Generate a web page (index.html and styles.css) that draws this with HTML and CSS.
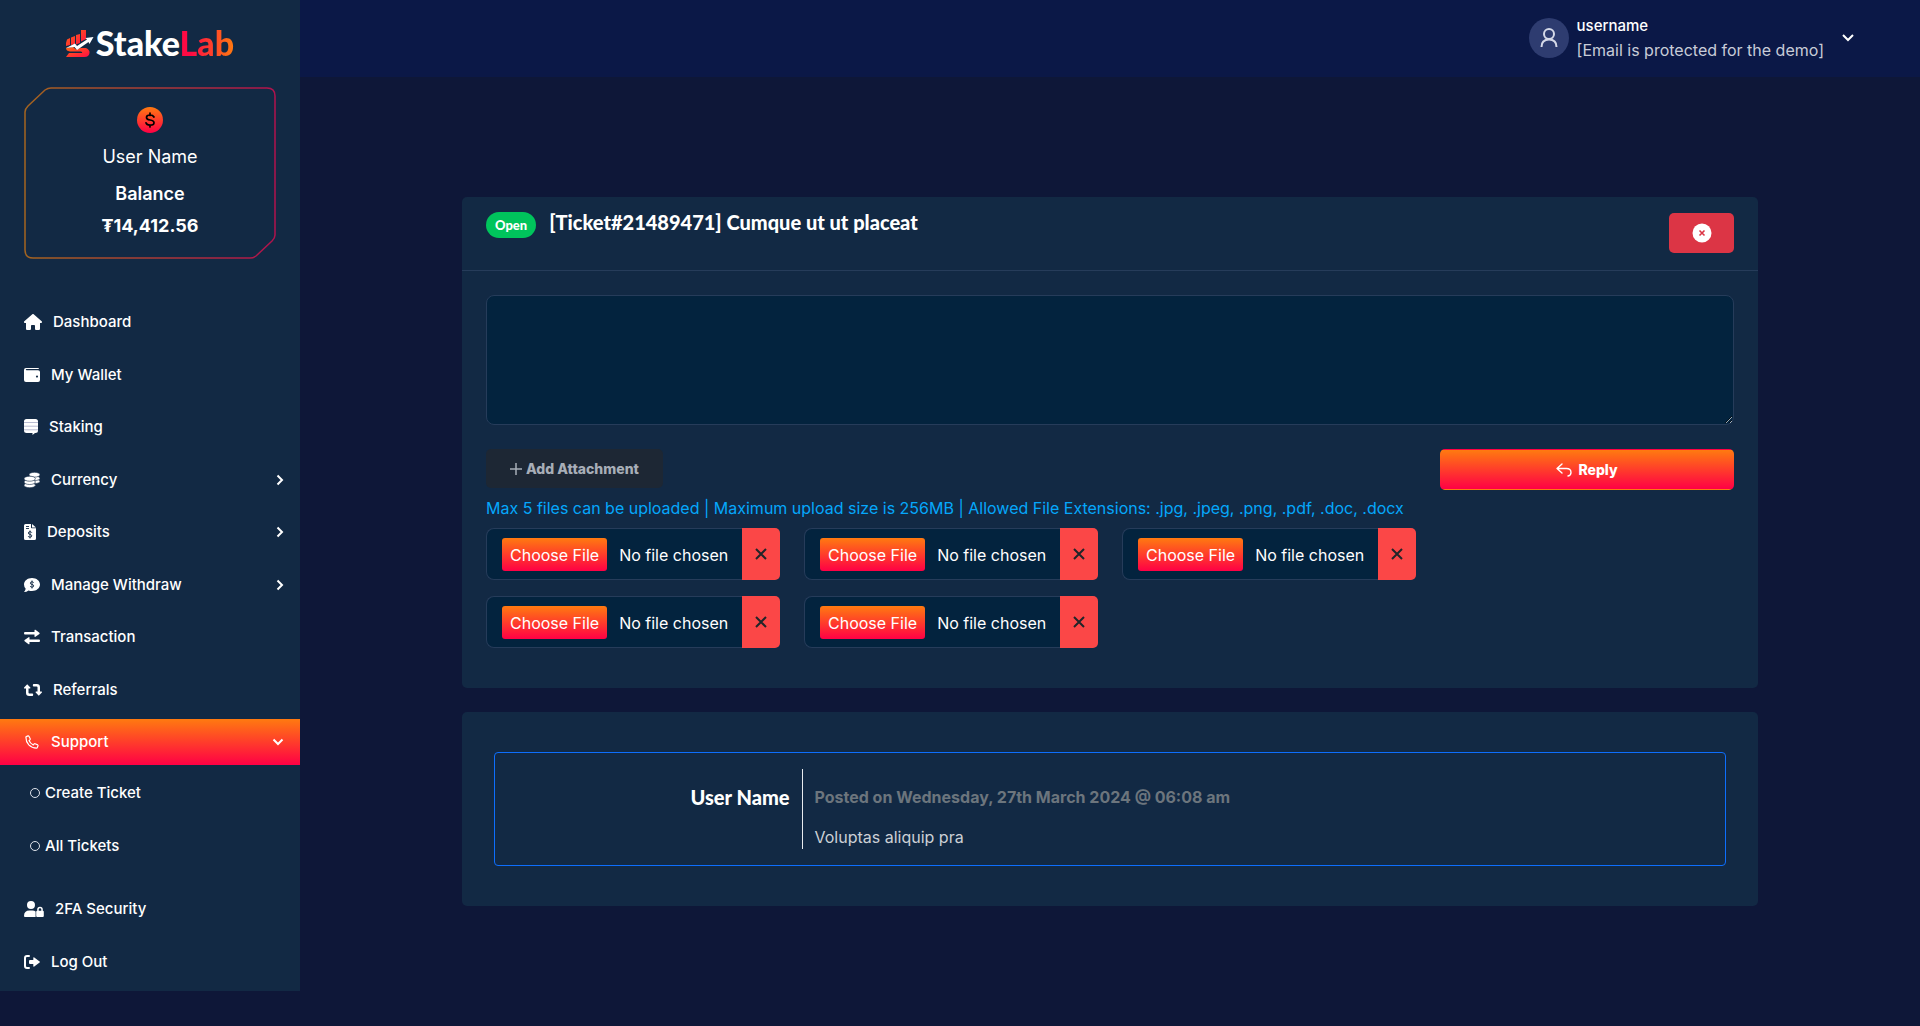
FILE: index.html
```html
<!DOCTYPE html>
<html lang="en">
<head>
<meta charset="utf-8">
<meta name="viewport" content="width=device-width, initial-scale=1">
<title>StakeLab - Support Ticket</title>
<link rel="stylesheet" href="styles.css">
</head>
<body>
<div class="layout">
  <aside class="sidebar">
    <a class="logo" href="#">
      <svg class="logo-mark" viewBox="0 0 28 27" aria-hidden="true">
        <defs><linearGradient id="mark" x1="0" y1="0" x2="1" y2="1"><stop offset="0" stop-color="#ff6a13"/><stop offset="1" stop-color="#ff0a44"/></linearGradient></defs>
        <path fill="url(#mark)" d="M0 13l1-3.500 3-1.500v7l-4 1zM5 7.500l4-1.500v8l-4 1zM10 5l4-1v9l-4 1.500zM15 0h5v9l-5 2.500z"/>
        <path fill="url(#mark)" d="M0 18l7-1 3 2.500 5-1.500h5q4 2 3.500 5-.5 4-5 4H0l3-4h13q1-1-1-1.500H4q-4-.5-4-3.500z"/>
        <path fill="#fff" d="M0 18l9-4.500 2 2.500 10-6.500-1.500-1.500 8-1-4 7-1-2-11.500 8-2.500-3z"/>
      </svg>
      <span class="logo-text">Stake<span class="logo-accent">Lab</span></span>
    </a>

    <section class="balance">
      <svg class="balance-frame" viewBox="0 0 252 172" preserveAspectRatio="none" aria-hidden="true">
        <defs><linearGradient id="frame" x1="0" x2="1"><stop offset="0" stop-color="#a4641f"/><stop offset="1" stop-color="#b0124d"/></linearGradient></defs>
        <path fill="none" stroke="url(#frame)" stroke-width="1.500" d="M27 1H243q8 0 8 8V148q0 3-3 6L232 169q-3 2-6 2H9q-8 0-8-8V25q0-3 3-6L21 3q3-2 6-2z"/>
      </svg>
      <svg class="coin" viewBox="0 0 26 26" aria-hidden="true">
        <defs><linearGradient id="coin" x1="0" y1="0" x2="0" y2="1"><stop offset="0" stop-color="#ff7a10"/><stop offset="1" stop-color="#ff0045"/></linearGradient></defs>
        <circle cx="13" cy="13" r="13" fill="url(#coin)"/>
        <path fill="none" stroke="#000" stroke-width="1.700" stroke-linecap="round" d="M13 6v2.500M13 18v2M17 10q-1-2-4-2-3.500 0-3.500 2.400 0 2 3.500 2.600 4 .6 4 2.800 0 2.400-4 2.400-3.400 0-4-2.400"/>
      </svg>
      <p class="balance-name">User Name</p>
      <h6 class="balance-title">Balance</h6>
      <p class="balance-amount">₮14,412.56</p>
    </section>

    <nav>
      <ul class="menu">
        <li><a href="#"><svg width="18" height="16" viewBox="0 0 576 512"><path fill="currentColor" d="M575.800 255.500c0 18-15 32.100-32 32.100h-32l.7 160.200c0 2.700-.2 5.400-.5 8.100V472c0 22.100-17.900 40-40 40H392c-22.100 0-40-17.900-40-40V384c0-17.700-14.300-32-32-32H256c-17.700 0-32 14.300-32 32v88c0 22.100-17.900 40-40 40H104c-22.100 0-40-17.900-40-40V287.600H32c-18 0-32-14-32-32.100 0-9 3-17 10-24L266.400 8c7-7 15-8 22-8s15 2 21 7L564.800 231.500c8 7 12 15 11 24z"/></svg><span>Dashboard</span></a></li>
        <li><a href="#"><svg width="16" height="16" viewBox="0 0 16 16"><path fill="currentColor" fill-rule="evenodd" d="M2 1h12q1 0 1 1H2.500q-.7 0-.7.600 0 .6.700.6H14q2 0 2 1.800v8q0 2-2 2H2q-2 0-2-2V3q0-2 2-2zm11 7.500a1 1 0 1 0 .01 0z"/></svg><span>My Wallet</span></a></li>
        <li><a href="#"><svg width="14" height="16" viewBox="0 0 14 16"><path fill="currentColor" d="M0 2.500Q0 0 2.500 0h9Q14 0 14 2.500V12q0 2-2.500 2H11l-2.500 2v-2h-6Q0 14 0 12z"/><path stroke="#b9bcd2" stroke-width="1" d="M0 3.500h14M0 7.200h14M0 10.800h14"/></svg><span>Staking</span></a></li>
        <li class="has-sub"><a href="#"><svg width="16" height="16" viewBox="0 0 16 16"><g fill="currentColor" stroke="#122944" stroke-width=".6"><ellipse cx="10.500" cy="9.300" rx="5.500" ry="2.300"/><ellipse cx="10.500" cy="6.300" rx="5.500" ry="2.300"/><ellipse cx="10.500" cy="2.700" rx="5.500" ry="2.400"/><ellipse cx="5.700" cy="13.200" rx="5.700" ry="2.500"/><ellipse cx="5.700" cy="10" rx="5.700" ry="2.500"/><ellipse cx="5.700" cy="6.700" rx="5.700" ry="2.500"/></g></svg><span>Currency</span><svg class="caret" viewBox="0 0 8 12"><path d="M1.500 1.500L6 6l-4.500 4.500"/></svg></a></li>
        <li class="has-sub"><a href="#"><svg width="12" height="16" viewBox="0 0 12 16"><path fill="currentColor" d="M1.500 0H7v3.500q0 .8.800.8H12v10.200q0 1.500-1.500 1.500h-9Q0 16 0 14.500v-13Q0 0 1.500 0zM8 0l4 3.500H8z"/><path fill="none" stroke="#122944" stroke-width=".9" d="M2 2.500h3M2 4.500h3M6 6.500v8M7.800 8.700Q7.400 7.700 6 7.700q-1.600 0-1.600 1.300T6 10.400q1.800.3 1.800 1.500T6 13.200q-1.500 0-1.900-1.100"/></svg><span>Deposits</span><svg class="caret" viewBox="0 0 8 12"><path d="M1.500 1.500L6 6l-4.500 4.500"/></svg></a></li>
        <li class="has-sub"><a href="#"><svg width="16" height="16" viewBox="0 0 16 16"><path fill="currentColor" d="M8 1c4.500 0 8 2.900 8 6.500S12.500 14 8 14q-1.900 0-3.500-.6Q2.600 14.900 0 15q1.300-1.300 1.700-3.200Q0 10 0 7.500C0 3.900 3.500 1 8 1z"/><path fill="none" stroke="#122944" stroke-width=".9" d="M8 3.500v8M9.700 5.700Q9.300 4.800 8 4.800q-1.600 0-1.600 1.300T8 7.400q1.700.3 1.700 1.500T8 10.200q-1.400 0-1.800-1.100"/></svg><span>Manage Withdraw</span><svg class="caret" viewBox="0 0 8 12"><path d="M1.500 1.500L6 6l-4.500 4.500"/></svg></a></li>
        <li><a href="#"><svg width="16" height="16" viewBox="0 0 16 16"><path fill="currentColor" d="M1 3h9.500V1.300q0-1 .9-.5l4 2.900q.6.600 0 1.200l-4 2.900q-.9.500-.9-.5V5.500H1q-1 0-1-1.200T1 3zM15 13H5.500v1.700q0 1-.9.500l-4-2.900q-.6-.6 0-1.200l4-2.900q.9-.5.9.5v1.800H15q1 0 1 1.200T15 13z"/></svg><span>Transaction</span></a></li>
        <li><a href="#"><svg width="18" height="16" viewBox="0 0 18 16"><path fill="currentColor" d="M3.200 2.200l3.100 3.400q.5.800-.5.900H4.500V10.700q0 .8.900.8h2.800q1 0 1 1.200t-1 1.200H5.200Q2 13.900 2 10.700V6.500H.6q-1-.1-.5-.9zM14.800 13.800l-3.100-3.400q-.5-.8.500-.9h1.300V5.300q0-.8-.9-.8H9.800q-1 0-1-1.200t1-1.200h3Q16 2.100 16 5.300v4.200h1.400q1 .1.500.9z"/></svg><span>Referrals</span></a></li>
        <li class="has-sub"><a class="active" href="#"><svg width="16" height="16" viewBox="0 0 16 16"><path fill="none" stroke="currentColor" stroke-width="1.200" stroke-linejoin="round" d="M2.300 2.600L4 1.900q.6-.2.900.3l1.300 2.500q.2.600-.2 1l-1 .9Q6.300 9.500 9.200 11l1-1.100q.4-.4.900-.2l2.600 1.200q.5.300.3.900l-.7 1.800q-.2.500-.8.500Q8 14 4.800 10.800 1.900 7.600 1.900 3.200q0-.4.400-.6z"/></svg><span>Support</span><svg class="caret caret-open" viewBox="0 0 12 8"><path d="M1.500 1.500L6 6l4.500-4.500"/></svg></a></li>
      </ul>
      <ul class="submenu">
        <li><a href="#"><span class="ring"></span>Create Ticket</a></li>
        <li><a href="#"><span class="ring"></span>All Tickets</a></li>
      </ul>
      <ul class="menu menu-end">
        <li><a href="#"><svg width="20" height="16" viewBox="0 0 20 16"><path fill="currentColor" fill-rule="evenodd" d="M7 0a4 4 0 1 1-.01 8A4 4 0 1 1 7 0zM5.500 9.500h3q1.800 0 3.100 1V16H1q-1 0-1-1 0-5.500 5.500-5.500zM13.200 9.700V8.500q0-2.700 2.800-2.700t2.800 2.700v1.200q1 .1 1 1.100V15q0 1-1 1h-5.600q-1 0-1-1v-4.200q0-1 1-1.100zm1.500 0h2.600V8.500q0-1.200-1.300-1.200t-1.300 1.200z"/></svg><span>2FA Security</span></a></li>
        <li><a href="#"><svg width="16" height="16" viewBox="0 0 16 16"><path fill="currentColor" d="M5 1q1 0 1 1T5 3H3Q2 3 2 4v8q0 1 1 1h2q1 0 1 1t-1 1H3q-3 0-3-3V4q0-3 3-3zM10.300 3.400l5.300 4q.7.600 0 1.200l-5.300 4q-1 .6-1-.6v-2H6q-1 0-1-1V7q0-1 1-1h3.300V4q0-1.200 1-.6z"/></svg><span>Log Out</span></a></li>
      </ul>
    </nav>
  </aside>

  <div class="page">
    <header class="topbar">
      <span class="avatar"><svg width="18" height="20" viewBox="0 0 18 20" aria-hidden="true"><circle cx="9" cy="6" r="5"/><path d="M1.500 19q0-7.500 7.500-7.500t7.500 7.500"/></svg></span>
      <span class="user"><span class="user-name">username</span><span class="user-mail">[Email is protected for the demo]</span></span>
      <button class="user-toggle" type="button" aria-label="Account menu"><svg width="14" height="10" viewBox="0 0 14 10"><path d="M2 2l5 5 5-5"/></svg></button>
    </header>

    <main class="content">
      <section class="card">
        <div class="card-head">
          <span class="badge">Open</span>
          <h5 class="ticket-title">[Ticket#21489471] Cumque ut ut placeat</h5>
          <button class="close-ticket" type="button" aria-label="Close ticket"><svg width="20" height="20" viewBox="0 0 20 20"><circle cx="10" cy="10" r="9.500" fill="#fff"/><path stroke="#dc3545" stroke-width="1.600" d="M7.500 7.500l5 5M12.500 7.500l-5 5"/></svg></button>
        </div>
        <form class="card-body">
          <textarea class="message" aria-label="Message"></textarea>
          <div class="reply-grid">
            <div>
              <button class="add" type="button" disabled><svg width="12" height="12" viewBox="0 0 12 12"><path stroke="currentColor" stroke-width="1.500" d="M6 0v12M0 6h12"/></svg>Add Attachment</button>
              <p class="hint">Max 5 files can be uploaded | Maximum upload size is 256MB | Allowed File Extensions: .jpg, .jpeg, .png, .pdf, .doc, .docx</p>
              <div class="files">
                <div class="file"><input type="file" aria-label="Attachment 1"><button type="button" aria-label="Remove attachment 1"><svg viewBox="0 0 12 12"><path d="M1 1l10 10M11 1L1 11"/></svg></button></div>
                <div class="file"><input type="file" aria-label="Attachment 2"><button type="button" aria-label="Remove attachment 2"><svg viewBox="0 0 12 12"><path d="M1 1l10 10M11 1L1 11"/></svg></button></div>
                <div class="file"><input type="file" aria-label="Attachment 3"><button type="button" aria-label="Remove attachment 3"><svg viewBox="0 0 12 12"><path d="M1 1l10 10M11 1L1 11"/></svg></button></div>
                <div class="file"><input type="file" aria-label="Attachment 4"><button type="button" aria-label="Remove attachment 4"><svg viewBox="0 0 12 12"><path d="M1 1l10 10M11 1L1 11"/></svg></button></div>
                <div class="file"><input type="file" aria-label="Attachment 5"><button type="button" aria-label="Remove attachment 5"><svg viewBox="0 0 12 12"><path d="M1 1l10 10M11 1L1 11"/></svg></button></div>
              </div>
            </div>
            <button class="reply" type="submit"><svg width="16" height="14" viewBox="0 0 16 14"><path fill="none" stroke="currentColor" stroke-width="1.400" stroke-linecap="round" stroke-linejoin="round" d="M6 1L1 5.500 6 10M1 5.500h9.500Q15 5.500 15 9.500q0 3-3 3.500"/></svg>Reply</button>
          </div>
        </form>
      </section>

      <section class="card thread">
        <article class="post">
          <h5 class="post-author">User Name</h5>
          <div class="post-body">
            <p class="post-date">Posted on Wednesday, 27th March 2024 @ 06:08 am</p>
            <p class="post-text">Voluptas aliquip pra</p>
          </div>
        </article>
      </section>
    </main>
  </div>
</div>
</body>
</html>
```

FILE: styles.css
```css
:root {
  --panel: #122944;
  --page: #0e1738;
  --field: #03233e;
  --line: #263c5a;
  --fire: linear-gradient(#ff7a10, #ff0045);
  --display: "Lato", "Open Sans", sans-serif;
}

* { box-sizing: border-box; }

body {
  margin: 0;
  background: var(--page);
  color: #fff;
  font: 16px/24px "Inter", sans-serif;
}

h5, h6, p, ul { margin: 0; padding: 0; }
ul { list-style: none; }
a { color: inherit; text-decoration: none; }
button, input, textarea { font: inherit; }
button { border: 0; cursor: pointer; }
svg { display: block; flex: none; }

.layout {
  display: flex;
  align-items: flex-start;
  min-height: 100vh;
}

/* Sidebar */
.sidebar {
  flex: none;
  width: 300px;
  padding: 23px 0 6px;
  background: var(--panel);
}

.logo {
  display: flex;
  align-items: center;
  justify-content: center;
  gap: 2px;
  height: 40px;
}
.logo-mark { width: 28px; height: 27px; }
.logo-text {
  font: 900 34px/40px var(--display);
}
.logo-accent {
  background: linear-gradient(90deg, #ff0a44 20%, #ff7a10);
  background-clip: text;
  color: transparent;
}

.balance {
  position: relative;
  display: flex;
  flex-direction: column;
  align-items: center;
  height: 172px;
  margin: 24px 24px 0;
  padding-top: 20px;
  font-size: 18px;
}
.balance-frame {
  position: absolute;
  inset: 0;
  width: 100%;
  height: 100%;
}
.coin { width: 26px; height: 26px; }
.balance-name { margin-top: 12px; }
.balance-title { margin-top: 13px; font-size: 18px; font-weight: 600; }
.balance-amount { margin-top: 8px; font-weight: 700; }

.menu {
  display: flex;
  flex-direction: column;
  justify-content: space-between;
  min-height: 466px;
  margin-top: 40px;
  font-size: 15px;
  font-weight: 500;
}
.menu a {
  display: flex;
  align-items: center;
  gap: 11px;
  height: 46px;
  padding: 0 16px 0 24px;
}
.menu .active { background: var(--fire); }
.caret {
  width: 8px;
  height: 12px;
  margin-left: auto;
  fill: none;
  stroke: currentColor;
  stroke-width: 2;
}
.caret-open { width: 12px; height: 8px; }

.submenu {
  display: grid;
  gap: 7px;
  margin-top: 5px;
  font-size: 15px;
  font-weight: 500;
}
.submenu a {
  display: flex;
  align-items: center;
  gap: 5px;
  height: 46px;
  padding-left: 30px;
}
.ring {
  width: 10px;
  height: 10px;
  border: 1px solid #dfe3ea;
  border-radius: 50%;
}
.menu-end { min-height: 99px; margin-top: 17px; }

/* Top bar */
.page { flex: 1; min-width: 0; }
.topbar {
  display: flex;
  align-items: center;
  justify-content: flex-end;
  height: 77px;
  padding: 0 65px 2px 0;
  background: #0b1847;
}
.avatar {
  display: grid;
  place-items: center;
  width: 40px;
  height: 40px;
  margin-right: 8px;
  border-radius: 50%;
  background: #2e3c70;
}
.avatar svg { fill: none; stroke: #d5d9e8; stroke-width: 2; }
.user { display: grid; }
.user-name { font-size: 15px; font-weight: 500; }
.user-mail { color: #c8ccd8; }
.user-toggle {
  margin-left: 17px;
  padding: 0;
  background: none;
}
.user-toggle svg { fill: none; stroke: #fff; stroke-width: 2; }

/* Cards */
.content {
  display: grid;
  grid-template-columns: minmax(0, 1fr);
  gap: 24px;
  max-width: 1320px;
  margin: 0 auto;
  padding: 120px 12px;
}
.card { border-radius: 5px; background: var(--panel); }
.card-head {
  display: flex;
  align-items: flex-start;
  padding: 16px 24px 17px;
  border-bottom: 1px solid var(--line);
}
.badge {
  margin: -1px 13px 0 0;
  padding: 0 9px;
  border-radius: 13px;
  background: #00c45c;
  font: 900 13px/26px var(--display);
}
.ticket-title { font: 900 20px/18px var(--display); }
.close-ticket {
  display: grid;
  place-items: center;
  width: 65px;
  height: 40px;
  margin-left: auto;
  border-radius: 5px;
  background: #dc3545;
}

.card-body { padding: 24px 24px 40px; }
.message {
  display: block;
  width: 100%;
  height: 130px;
  padding: 12px;
  border: 1px solid var(--line);
  border-radius: 8px;
  background: var(--field);
  color: #fff;
  resize: vertical;
}
.reply-grid {
  display: grid;
  grid-template-columns: minmax(0, 930fr) minmax(0, 294fr);
  align-items: start;
  gap: 24px;
  margin-top: 24px;
}
.add {
  display: flex;
  align-items: center;
  gap: 4px;
  height: 39px;
  padding: 0 24px;
  border-radius: 5px;
  background: #1d2734;
  color: #a7aeb7;
  font-size: 14px;
  font-weight: 800;
}
.hint { margin: 8px 0; color: #05a7fb; }
.files {
  display: grid;
  grid-template-columns: repeat(3, minmax(0, 1fr));
  gap: 16px 24px;
}
.file { display: flex; height: 52px; }
.file input {
  flex: 1;
  min-width: 0;
  padding: 9px 8px 9px 15px;
  border: 1px solid var(--line);
  border-right: 0;
  border-radius: 8px 0 0 8px;
  background: var(--field);
  color: #fff;
}
.file input::file-selector-button {
  height: 33px;
  margin: 0 12px 0 0;
  padding: 0 8px;
  border: 0;
  border-radius: 3px;
  background: var(--fire);
  color: #fff;
  font: inherit;
}
.file button {
  display: grid;
  place-items: center;
  width: 38px;
  padding: 0;
  border-radius: 0 5px 5px 0;
  background: #fb4747;
}
.file button svg { width: 12px; height: 12px; stroke: #212529; stroke-width: 2; }
.reply {
  display: flex;
  align-items: center;
  justify-content: center;
  gap: 6px;
  height: 41px;
  border: 1px solid transparent;
  border-radius: 5px;
  background: var(--fire);
  color: #fff;
  font-size: 14px;
  font-weight: 800;
}

/* Conversation */
.thread { padding: 40px 32px; }
.post {
  display: grid;
  grid-template-columns: minmax(0, 1fr) minmax(0, 3fr);
  padding: 16px 0;
  border: 1px solid #0d6efd;
  border-radius: 4px;
}
.post-author {
  padding: 16px 12px;
  border-right: 1px solid #e8ebee;
  font: 900 20px/24px var(--display);
  text-align: right;
}
.post-body { padding: 16px 12px 0; }
.post-date { color: #6c757d; font-weight: 700; }
.post-text { margin-top: 16px; color: #ccd0d6; }
```
